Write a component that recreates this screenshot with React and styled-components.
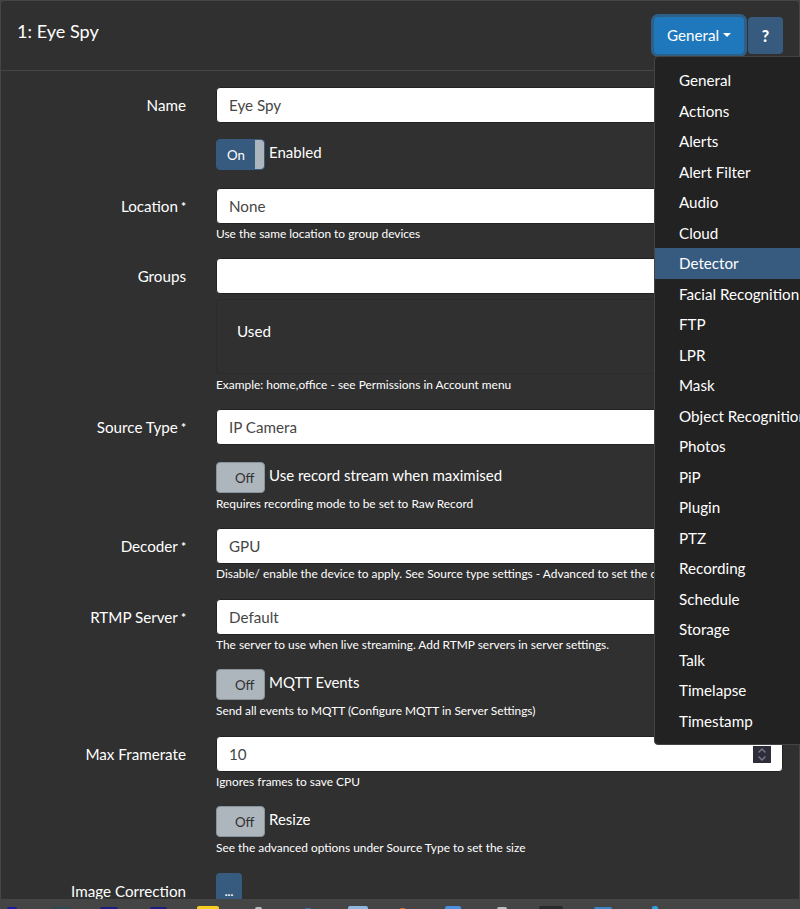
import React from 'react'
import styled, { createGlobalStyle } from 'styled-components'

const GlobalStyle = createGlobalStyle`
  html, body {
    margin: 0;
    padding: 0;
    background: #454545;
  }
  body {
    width: 800px;
    height: 909px;
    overflow: hidden;
    font-family: Lato, "Liberation Sans", sans-serif;
    font-size: 15.2px;
    color: #fff;
  }
  * {
    box-sizing: border-box;
  }
`

const Page = styled.div`
  position: relative;
  width: 800px;
  height: 909px;
  overflow: hidden;
`

const Modal = styled.div`
  height: 899px;
  background: #303030;
  border: 1px solid #464646;
  border-bottom: 0;
  border-radius: 4px 4px 0 0;
  overflow: hidden;
`

const Header = styled.div`
  display: flex;
  align-items: flex-start;
  justify-content: space-between;
  height: 70px;
  padding: 16px 16px 0 16px;
  border-bottom: 1px solid #464646;
`

const Title = styled.h4`
  margin: 1px 0 0;
  font-size: 18.1px;
  font-weight: 400;
  line-height: 27px;
`

const HeaderActions = styled.div`
  display: flex;
  gap: 4px;
`

const SectionButton = styled.div`
  display: flex;
  align-items: center;
  width: 90px;
  height: 37px;
  padding: 0 0 1px 13px;
  background: #1f78bc;
  border-radius: 4px;
  box-shadow: 0 0 0 3px #2f5f85;
`

const Caret = styled.span`
  width: 0;
  height: 0;
  margin-left: 4px;
  border-top: 4px solid #fff;
  border-left: 4px solid transparent;
  border-right: 4px solid transparent;
`

const HelpButton = styled.div`
  display: flex;
  align-items: center;
  justify-content: center;
  width: 35px;
  height: 37px;
  padding-bottom: 1px;
  background: #375a7f;
  border-radius: 4px;
  font-size: 16px;
  font-weight: 900;
`

const Body = styled.div`
  padding: 17px 16px 0 16px;
`

const Row = styled.div`
  display: grid;
  grid-template-columns: 169px 1fr;
  column-gap: 30px;
  margin-bottom: ${({ $gap }) => $gap ?? 17}px;
`

const Label = styled.div`
  padding-top: ${({ $top }) => $top ?? 6}px;
  text-align: right;
  line-height: 22px;
`

const Required = styled.span`
  font-size: 12px;
  font-weight: 700;
  margin-left: 3px;
  vertical-align: 1px;
`

const Field = styled.div`
  display: flex;
  align-items: center;
  position: relative;
  height: 36px;
  margin-top: -1px;
  padding: 0 12px;
  background: #fff;
  border: 1px solid #222;
  border-radius: 4px;
  color: #464646;
`

const Spinner = styled.svg`
  position: absolute;
  top: 9px;
  right: 11px;
  width: 18px;
  height: 17px;
  background: #2e2e3a;
`

const UsedBox = styled.div`
  height: 75px;
  margin-top: 5px;
  padding: 20px 20px 0;
  border: 1px solid #2b2b2b;
  border-radius: 4px;
  line-height: 22px;
`

const Help = styled.div`
  margin-top: ${({ $top }) => $top ?? 2}px;
  font-size: 11.9px;
  line-height: 15px;
  white-space: nowrap;
`

const ToggleLine = styled.div`
  display: flex;
  align-items: flex-start;
`

const Toggle = styled.div`
  display: flex;
  width: 49px;
  height: 31px;
  margin-right: 4px;
  border-radius: 4px;
  overflow: hidden;
  background: ${({ $on }) => ($on ? '#375a7f' : '#adb5bd')};
  border: 1px solid ${({ $on }) => ($on ? '#375a7f' : '#8b939a')};
`

const ToggleText = styled.span`
  flex: 1;
  padding-left: ${({ $on }) => ($on ? 10 : 18)}px;
  line-height: 31px;
  font-size: 13.3px;
  color: ${({ $on }) => ($on ? '#fff' : '#303030')};
`

const ToggleKnob = styled.span`
  width: 9px;
  background: #adb5bd;
  border-radius: 0 3px 3px 0;
`

const ToggleLabel = styled.span`
  padding-top: 2px;
  font-size: 15px;
  line-height: 22px;
`

const MoreButton = styled.div`
  display: flex;
  align-items: center;
  justify-content: center;
  width: 26px;
  height: 34px;
  padding-top: 2px;
  background: #375a7f;
  border-radius: 4px;
  font-size: 12px;
  font-weight: 700;
`

const Menu = styled.div`
  position: absolute;
  top: 56px;
  left: 654px;
  width: 170px;
  padding: 8px 0;
  background: #222;
  border: 1px solid #444;
  border-radius: 4px;
`

const MenuItem = styled.div`
  height: 30.5px;
  padding-left: 24px;
  background: ${({ $active }) => ($active ? '#375a7f' : 'transparent')};
  line-height: 30px;
  white-space: nowrap;
`

const Taskbar = styled.div`
  display: flex;
  align-items: flex-end;
  height: 10px;
  background: #454545;
`

const TrayIcon = styled.span`
  width: ${({ $w }) => $w}px;
  height: ${({ $h }) => $h}px;
  margin-left: ${({ $gap }) => $gap}px;
  background: ${({ $color }) => $color};
  border-radius: 2px 2px 0 0;
`

const menuItems = [
  'General', 'Actions', 'Alerts', 'Alert Filter', 'Audio', 'Cloud', 'Detector',
  'Facial Recognition', 'FTP', 'LPR', 'Mask', 'Object Recognition', 'Photos', 'PiP',
  'Plugin', 'PTZ', 'Recording', 'Schedule', 'Storage', 'Talk', 'Timelapse', 'Timestamp',
]

// tops of the desktop taskbar icons peeking in at the bottom
const trayIcons = [
  { gap: 7, w: 10, h: 2, color: '#1a1a9a' },
  { gap: 35, w: 18, h: 2, color: '#2c4a52' },
  { gap: 30, w: 18, h: 2, color: '#1c1c80' },
  { gap: 32, w: 17, h: 2, color: '#1c1c80' },
  { gap: 30, w: 22, h: 3, color: '#f5d020' },
  { gap: 36, w: 7, h: 2, color: '#bbbbbb' },
  { gap: 43, w: 6, h: 1, color: '#3a70b0' },
  { gap: 37, w: 20, h: 3, color: '#8fb8e0' },
  { gap: 32, w: 5, h: 1, color: '#d87020' },
  { gap: 40, w: 16, h: 3, color: '#4a90e0' },
  { gap: 36, w: 10, h: 2, color: '#bdbdbd' },
  { gap: 32, w: 24, h: 3, color: '#2a2a2a' },
  { gap: 31, w: 18, h: 2, color: '#3b88c8' },
  { gap: 40, w: 6, h: 3, color: '#2aa0e0' },
]

function Switch({ on, label }) {
  return (
    <ToggleLine>
      <Toggle $on={on}>
        <ToggleText $on={on}>{on ? 'On' : 'Off'}</ToggleText>
        {on && <ToggleKnob />}
      </Toggle>
      <ToggleLabel>{label}</ToggleLabel>
    </ToggleLine>
  )
}

export default function App() {
  return (
    <Page>
      <GlobalStyle />
      <Modal>
        <Header>
          <Title>1: Eye Spy</Title>
          <HeaderActions>
            <SectionButton>General<Caret /></SectionButton>
            <HelpButton>?</HelpButton>
          </HeaderActions>
        </Header>
        <Body>
          <Row $gap={16}>
            <Label>Name</Label>
            <Field>Eye Spy</Field>
          </Row>
          <Row $gap={19}>
            <div />
            <Switch on label="Enabled" />
          </Row>
          <Row $gap={18}>
            <Label>Location<Required>*</Required></Label>
            <div>
              <Field>None</Field>
              <Help>Use the same location to group devices</Help>
            </div>
          </Row>
          <Row $gap={18}>
            <Label>Groups</Label>
            <div>
              <Field />
              <UsedBox>Used</UsedBox>
              <Help $top={3}>Example: home,office - see Permissions in Account menu</Help>
            </div>
          </Row>
          <Row>
            <Label>Source Type<Required>*</Required></Label>
            <Field>IP Camera</Field>
          </Row>
          <Row $gap={18}>
            <div />
            <div>
              <Switch label="Use record stream when maximised" />
              <Help $top={3}>Requires recording mode to be set to Raw Record</Help>
            </div>
          </Row>
          <Row $gap={19}>
            <Label>Decoder<Required>*</Required></Label>
            <div>
              <Field>GPU</Field>
              <Help>Disable/ enable the device to apply. See Source type settings - Advanced to set the device</Help>
            </div>
          </Row>
          <Row>
            <Label>RTMP Server<Required>*</Required></Label>
            <div>
              <Field>Default</Field>
              <Help>The server to use when live streaming. Add RTMP servers in server settings.</Help>
            </div>
          </Row>
          <Row $gap={19}>
            <div />
            <div>
              <Switch label="MQTT Events" />
              <Help $top={3}>Send all events to MQTT (Configure MQTT in Server Settings)</Help>
            </div>
          </Row>
          <Row>
            <Label>Max Framerate</Label>
            <div>
              <Field>
                10
                <Spinner viewBox="0 0 18 17" fill="none" stroke="#77778a" strokeWidth="1.4">
                  <path d="M5.5 6.5 9 3l3.5 3.5" />
                  <path d="M5.5 10.5 9 14l3.5-3.5" />
                </Spinner>
              </Field>
              <Help>Ignores frames to save CPU</Help>
            </div>
          </Row>
          <Row $gap={18}>
            <div />
            <div>
              <Switch label="Resize" />
              <Help $top={3}>See the advanced options under Source Type to set the size</Help>
            </div>
          </Row>
          <Row>
            <Label $top={7}>Image Correction</Label>
            <MoreButton>...</MoreButton>
          </Row>
        </Body>
      </Modal>
      <Taskbar>
        {trayIcons.map((icon, i) => (
          <TrayIcon key={i} $gap={icon.gap} $w={icon.w} $h={icon.h} $color={icon.color} />
        ))}
      </Taskbar>
      <Menu>
        {menuItems.map((item) => (
          <MenuItem key={item} $active={item === 'Detector'}>{item}</MenuItem>
        ))}
      </Menu>
    </Page>
  )
}
